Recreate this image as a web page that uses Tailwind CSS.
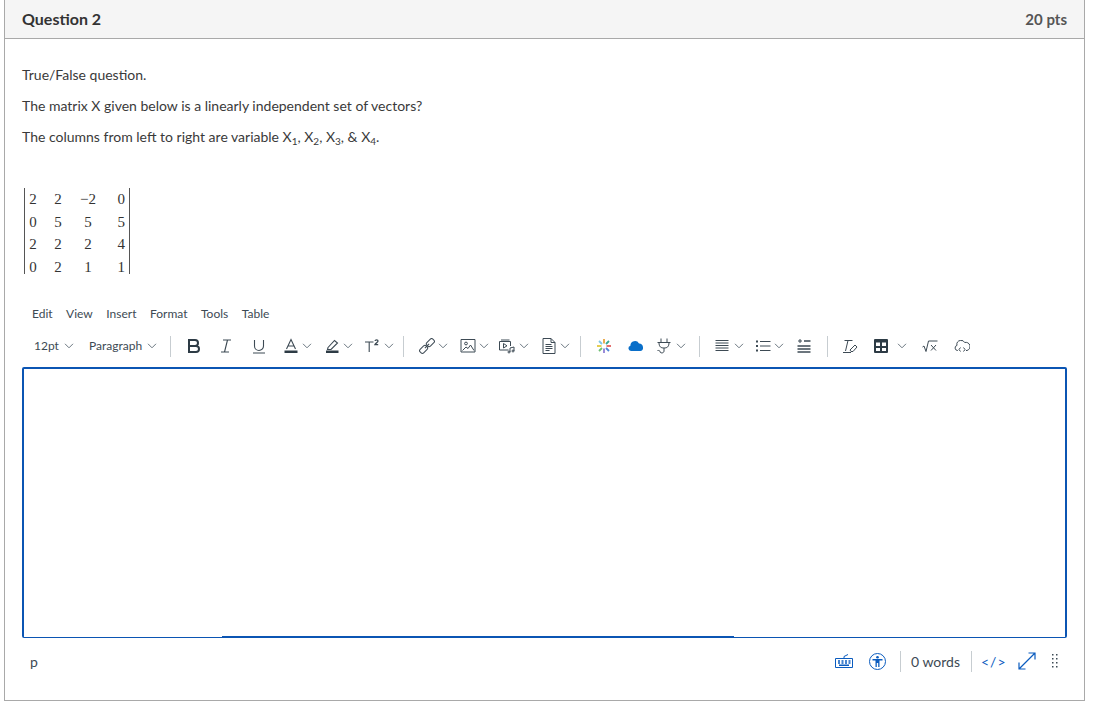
<!DOCTYPE html>
<html>
<head>
<meta charset="utf-8">
<script src="https://cdn.jsdelivr.net/npm/@tailwindcss/browser@4"></script>
</head>
<body class="bg-white font-['Lato','Noto_Sans',sans-serif] text-[#2d3b45]">
<div class="ml-[4px] w-[1081px] h-[701px] border-x border-b border-[#a9a9a9] flex flex-col">
  <div class="h-[39px] bg-[#f5f5f5] border-b border-[#a9a9a9] flex items-center justify-between pl-[17px] pr-[17px] shrink-0">
    <h2 class="text-[16px] font-bold text-[#333]">Question 2</h2>
    <span class="text-[15px] font-bold text-[#555]">20 pts</span>
  </div>
  <div class="px-[17px] pt-[27px] text-[14px] leading-[18px] text-[#3a3a3a]">
    <p>True/False question.</p>
    <p class="mt-[13px]">The matrix X given below is a linearly independent set of vectors?</p>
    <p class="mt-[13px]">The columns from left to right are variable X<sub class="text-[10px] leading-none">1</sub>, X<sub class="text-[10px] leading-none">2</sub>, X<sub class="text-[10px] leading-none">3</sub>, &amp; X<sub class="text-[10px] leading-none">4</sub>.</p>
    <div class="mt-[42px] ml-[2px] w-[106px] h-[86px] border-x border-[#555] grid grid-cols-[16px_34px_26px_28px] auto-rows-[22.5px] items-center justify-items-center font-['Liberation_Serif','DejaVu_Serif',serif] text-[15px] text-[#333]">
      <span>2</span><span>2</span><span class="whitespace-nowrap">−2</span><span class="justify-self-end pr-[4px]">0</span>
      <span>0</span><span>5</span><span>5</span><span class="justify-self-end pr-[4px]">5</span>
      <span>2</span><span>2</span><span>2</span><span class="justify-self-end pr-[4px]">4</span>
      <span>0</span><span>2</span><span>1</span><span class="justify-self-end pr-[4px]">1</span>
    </div>
  </div>
  <nav class="flex ml-[27px] mt-[32px] text-[12px] leading-[16px] h-[16px] text-[#3d4a54] gap-[13.5px]">
    <span>Edit</span><span>View</span><span>Insert</span><span>Format</span><span>Tools</span><span>Table</span>
  </nav>
  <div class="flex items-center h-[24px] mt-[12px] ml-[29px] text-[12px] text-[#3d4a54]">
    <span class="w-[27px]">12pt</span>
    <svg class="ml-[3px]" width="10" height="6" viewBox="0 0 10 6" fill="none" stroke="#6b7780"><path d="M1 .8l4 4 4-4"/></svg>
    <span class="ml-[15px] w-[56px]">Paragraph</span>
    <svg class="ml-[2px]" width="10" height="6" viewBox="0 0 10 6" fill="none" stroke="#6b7780"><path d="M1 .8l4 4 4-4"/></svg>
    <span class="ml-[13px] w-px h-[21px] bg-[#c7cdd1]"></span>
    <!-- B -->
    <svg class="ml-[15px]" width="16" height="16" viewBox="0 0 16 16" fill="none" stroke="#2d3b45" stroke-width="2"><path d="M3 2h6a3 3 0 0 1 0 6H3zM3 8h7a3 3 0 0 1 0 6H3z"/></svg>
    <!-- I -->
    <svg class="ml-[16px]" width="16" height="16" viewBox="0 0 16 16" fill="none" stroke="#3d4a54" stroke-width="1.1"><path d="M5 2h8M3 14h8M9.500 2L6.500 14"/></svg>
    <!-- U -->
    <svg class="ml-[17px]" width="16" height="16" viewBox="0 0 16 16" fill="none" stroke="#3d4a54" stroke-width="1.1"><path d="M3.500 2v6a4.500 4.500 0 0 0 9 0V2M2 15h12"/></svg>
    <!-- A -->
    <svg class="ml-[16px]" width="16" height="16" viewBox="0 0 16 16" fill="none" stroke="#3d4a54" stroke-width="1.1"><path d="M3.500 11L8 1.500 12.500 11M5 8h6"/><path d="M1.500 12.500h13v2.500h-13z" fill="#2d3b45" stroke="none"/></svg>
    <svg class="ml-[3px]" width="10" height="6" viewBox="0 0 10 6" fill="none" stroke="#6b7780"><path d="M1 .8l4 4 4-4"/></svg>
    <!-- highlight pen -->
    <svg class="ml-[12px]" width="16" height="16" viewBox="0 0 16 16" fill="none" stroke="#3d4a54" stroke-width="1.1"><path d="M4 9.500L10.500 2.500l3 2.500-6.500 6.500H3.500z"/><path d="M2 12.500h12.500V15H2z" fill="#2d3b45" stroke="none"/></svg>
    <svg class="ml-[3px]" width="10" height="6" viewBox="0 0 10 6" fill="none" stroke="#6b7780"><path d="M1 .8l4 4 4-4"/></svg>
    <!-- T2 -->
    <svg class="ml-[11px]" width="16" height="16" viewBox="0 0 16 16" fill="none" stroke="#3d4a54" stroke-width="1.1"><path d="M1 4h8.500M5.200 4v10"/><path d="M11 3c.3-1.600 3-1.600 3 0 0 1.200-2.200 2-3 3.600h3.200" stroke-width="1.300"/></svg>
    <svg class="ml-[4px]" width="10" height="6" viewBox="0 0 10 6" fill="none" stroke="#6b7780"><path d="M1 .8l4 4 4-4"/></svg>
    <span class="ml-[9px] w-px h-[21px] bg-[#c7cdd1]"></span>
    <!-- link -->
    <svg class="ml-[15px]" width="16" height="16" viewBox="0 0 16 16" fill="none" stroke="#3d4a54" stroke-width="1"><g transform="rotate(-45 8 8)"><rect x="-1" y="5.500" width="8.500" height="5" rx="1.800"/><rect x="8.500" y="5.500" width="8.500" height="5" rx="1.800"/><path d="M5 8h6"/></g></svg>
    <svg class="ml-[3px]" width="10" height="6" viewBox="0 0 10 6" fill="none" stroke="#6b7780"><path d="M1 .8l4 4 4-4"/></svg>
    <!-- image -->
    <svg class="ml-[12px]" width="16" height="16" viewBox="0 0 16 16" fill="none" stroke="#3d4a54" stroke-width="1"><path d="M1 1.500h14v12.500H1z"/><circle cx="6" cy="5.500" r="1.400"/><path d="M2.500 12.500l3.500-3.500 2 1.500 2.500-3.500 3.500 5.500"/></svg>
    <svg class="ml-[3px]" width="10" height="6" viewBox="0 0 10 6" fill="none" stroke="#6b7780"><path d="M1 .8l4 4 4-4"/></svg>
    <!-- media -->
    <svg class="ml-[10px]" width="16" height="16" viewBox="0 0 16 16" fill="none" stroke="#3d4a54" stroke-width="1"><path d="M9.500 12H.5V3.500h11V8"/><path d="M2 2h8.500"/><path d="M4.500 5.500l3.500 2.300-3.500 2.200z"/><path d="M11 14V10l4-1v4"/><circle cx="10" cy="14" r="1"/><circle cx="14" cy="13" r="1"/></svg>
    <svg class="ml-[4px]" width="10" height="6" viewBox="0 0 10 6" fill="none" stroke="#6b7780"><path d="M1 .8l4 4 4-4"/></svg>
    <!-- doc -->
    <svg class="ml-[12px]" width="16" height="16" viewBox="0 0 16 16" fill="none" stroke="#3d4a54" stroke-width="1"><path d="M2 .5h8l4 4v11H2z"/><path d="M10 .5V4.500h4"/><path d="M4.500 6.500h6M4.500 8.500h7M4.500 10.500h7M4.500 12.500h4"/></svg>
    <svg class="ml-[3px]" width="10" height="6" viewBox="0 0 10 6" fill="none" stroke="#6b7780"><path d="M1 .8l4 4 4-4"/></svg>
    <span class="ml-[10px] w-px h-[21px] bg-[#c7cdd1]"></span>
    <!-- apps -->
    <svg class="ml-[15px]" width="16" height="16" viewBox="0 0 16 16" fill="none" stroke-width="1.800"><path d="M8 1v4.500" stroke="#e8a33d"/><path d="M8 10.500V15" stroke="#8f7fd6"/><path d="M1 8h4.500" stroke="#e2c93f"/><path d="M10.500 8H15" stroke="#e0605f"/><path d="M3 3l3 3" stroke="#7fc7e8"/><path d="M13 3l-3 3" stroke="#38a893"/><path d="M3 13l3-3" stroke="#6fbf73"/><path d="M13 13l-3-3" stroke="#4f86d9"/></svg>
    <!-- cloud -->
    <svg class="ml-[16px]" width="16" height="16" viewBox="0 0 16 16"><path d="M3 13a2.700 2.700 0 0 1-.6-5.300A4.600 4.600 0 0 1 11 5.500a3.800 3.800 0 0 1 4 3.700c.4 2-1 3.800-2.700 3.800z" fill="#0a6fc9"/></svg>
    <!-- plug -->
    <svg class="ml-[12px]" width="16" height="16" viewBox="0 0 16 16" fill="none" stroke="#3d4a54" stroke-width="1"><path d="M1.500 4.500h13M5 4.500V.5M11 4.500V.5M3 4.500c0 4.500 2 5.500 5 5.500s5-1 5-5.500M8 10v3c0 2.500-4 2.500-4 .5 0-.8-1-1.200-2.500-1"/></svg>
    <svg class="ml-[4px]" width="10" height="6" viewBox="0 0 10 6" fill="none" stroke="#6b7780"><path d="M1 .8l4 4 4-4"/></svg>
    <span class="ml-[13px] w-px h-[21px] bg-[#c7cdd1]"></span>
    <!-- align -->
    <svg class="ml-[14px]" width="16" height="16" viewBox="0 0 16 16" fill="none" stroke="#3d4a54" stroke-width="1"><path d="M1.500 2.500h13M1.500 5h13M1.500 7.500h13M1.500 10h13M1.500 12.500h13"/></svg>
    <svg class="ml-[4px]" width="10" height="6" viewBox="0 0 10 6" fill="none" stroke="#6b7780"><path d="M1 .8l4 4 4-4"/></svg>
    <!-- list -->
    <svg class="ml-[11px]" width="16" height="16" viewBox="0 0 16 16" fill="none" stroke="#3d4a54" stroke-width="1"><path d="M5 3.500h10.500M5 8h10.500M5 12.500h10.500"/><path d="M1 3.500h2M1 8h2M1 12.500h2" stroke-width="2"/></svg>
    <svg class="ml-[3px]" width="10" height="6" viewBox="0 0 10 6" fill="none" stroke="#6b7780"><path d="M1 .8l4 4 4-4"/></svg>
    <!-- indent -->
    <svg class="ml-[12px]" width="16" height="16" viewBox="0 0 16 16" fill="none" stroke="#3d4a54" stroke-width="1.300"><path d="M8 3h6.500M1.500 8h13M1.500 11h13M1.500 14h13"/><path d="M2 3h4M4 1v4" stroke-width="1"/></svg>
    <span class="ml-[15px] w-px h-[21px] bg-[#c7cdd1]"></span>
    <!-- clear format -->
    <svg class="ml-[14px]" width="16" height="16" viewBox="0 0 16 16" fill="none" stroke="#3d4a54" stroke-width="1"><path d="M2.500 2.500h8M6 2.500L3.500 13M1 14.500h8"/><path d="M8 12l5-5 2 2-4 4.500H9z"/></svg>
    <!-- table -->
    <svg class="ml-[15px]" width="16" height="16" viewBox="0 0 16 16" fill="#2d3b45"><path fill-rule="evenodd" d="M2 1h12a1 1 0 0 1 1 1v12a1 1 0 0 1-1 1H2a1 1 0 0 1-1-1V2a1 1 0 0 1 1-1zm1 3.500v3.500h4V4.500zm6 0v3.500h4V4.500zM3 10v3h4v-3zm6 0v3h4v-3z"/></svg>
    <svg class="ml-[8px]" width="10" height="6" viewBox="0 0 10 6" fill="none" stroke="#6b7780"><path d="M1 .8l4 4 4-4"/></svg>
    <!-- sqrt -->
    <svg class="ml-[15px]" width="16" height="16" viewBox="0 0 16 16" fill="none" stroke="#3d4a54" stroke-width="1"><path d="M.5 9l1.500-1 2 5.500L6.500 3H15.500M9 7l5 5.500M14 7l-5 5.500"/></svg>
    <!-- cloud code -->
    <svg class="ml-[16px]" width="16" height="16" viewBox="0 0 16 16" fill="none" stroke="#3d4a54" stroke-width="1"><path d="M4 12.500H3.500A2.600 2.600 0 0 1 3 7.400 3.700 3.700 0 0 1 6.500 2.500 3.800 3.800 0 0 1 10.700 4.500 3.400 3.400 0 0 1 13 12.500h-1"/><path d="M6.500 9.500l-1.500 2 1.500 2M9.500 9.500l1.500 2-1.500 2"/></svg>
  </div>
  <div class="relative ml-[17px] mt-[9px] w-[1045px] h-[271px] border-2 border-b border-[#0b55b3] rounded-[2px] shrink-0">
    <div class="absolute bottom-[-1px] left-[198px] w-[512px] h-[2px] bg-[#0b55b3]"></div>
  </div>
  <div class="flex items-center h-[24px] mt-[11px] pl-[25px] text-[14px] text-[#3d4a54]">
    <span class="w-[805px]">p</span>
    <svg width="18" height="16" viewBox="0 0 18 16" fill="none" stroke="#0b5cbf" stroke-width="1"><path d="M.5 5.500h17v9H.5zM9 5.500V3.500l4-2"/><path d="M3 8h2M6.500 8h2M10 8h2M13.500 8h2M3 10h2M6.500 10h2M10 10h2M13.500 10h2M4 12.300h10" stroke-width="1.400"/></svg>
    <svg class="ml-[16px]" width="17" height="17" viewBox="0 0 17 17" fill="none" stroke="#0b5cbf"><circle cx="8.500" cy="8.500" r="8"/><circle cx="8.500" cy="4.300" r="1.300" fill="#0b5cbf" stroke="none"/><path d="M3.500 6h10v1.500H10.500V14H9.200v-4H7.800v4H6.500V7.500H3.500z" fill="#0b5cbf" stroke="none"/></svg>
    <span class="ml-[14px] w-px h-[21px] bg-[#c7cdd1]"></span>
    <span class="ml-[10px] w-[49px] text-[14px] whitespace-nowrap">0 words</span>
    <span class="ml-[11px] w-px h-[21px] bg-[#c7cdd1]"></span>
    <span class="ml-[9px] w-[25px] text-[14px] text-[#0b5cbf] tracking-[1px] whitespace-nowrap">&lt;/&gt;</span>
    <svg class="ml-[12px]" width="18" height="18" viewBox="0 0 18 18" fill="none" stroke="#0b5cbf" stroke-width="1.200"><path d="M1 17L17 1M10.500 1H17v6.500M1 10.500V17h6.500"/></svg>
    <svg class="ml-[16px]" width="7" height="15" viewBox="0 0 7 15" fill="#3d4a54"><path d="M0 0h1.500v1.500H0zM4 0h1.500v1.500H4zM0 4h1.500v1.500H0zM4 4h1.500v1.500H4zM0 8h1.500v1.500H0zM4 8h1.500v1.500H4zM0 12h1.500v1.500H0zM4 12h1.500v1.500H4z"/></svg>
  </div>
</div>
</body>
</html>
